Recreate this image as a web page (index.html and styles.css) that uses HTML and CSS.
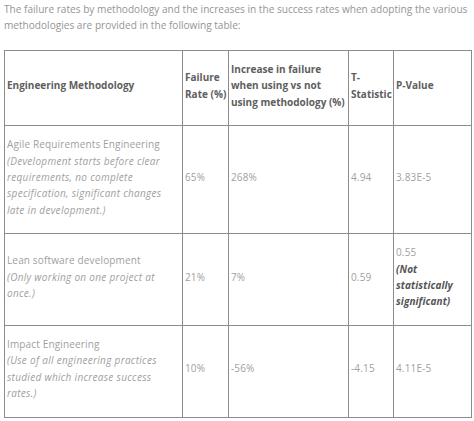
FILE: index.html
```html
<!DOCTYPE html>
<html>
<head>
<meta charset="utf-8">
<link rel="stylesheet" href="styles.css">
</head>
<body>
<p class="intro">The failure rates by methodology and the increases in the success rates when adopting the various methodologies are provided in the following table:</p>
<table class="data">
  <colgroup>
    <col class="c1"><col class="c2"><col class="c3"><col class="c4"><col class="c5">
  </colgroup>
  <thead>
    <tr>
      <th>Engineering Methodology</th>
      <th>Failure Rate (%)</th>
      <th>Increase in failure when using vs not using methodology (%)</th>
      <th>T-Statistic</th>
      <th>P-Value</th>
    </tr>
  </thead>
  <tbody>
    <tr>
      <td>Agile Requirements Engineering<br><em>(Development starts before clear requirements, no complete specification, significant changes late in development.)</em></td>
      <td>65%</td>
      <td>268%</td>
      <td>4.94</td>
      <td>3.83E-5</td>
    </tr>
    <tr>
      <td>Lean software development<br><em>(Only working on one project at once.)</em></td>
      <td>21%</td>
      <td>7%</td>
      <td>0.59</td>
      <td>0.55<br><strong class="note"><em>(Not statistically significant)</em></strong></td>
    </tr>
    <tr>
      <td>Impact Engineering<br><em>(Use of all engineering practices studied which increase success rates.)</em></td>
      <td>10%</td>
      <td>-56%</td>
      <td>-4.15</td>
      <td>4.11E-5</td>
    </tr>
  </tbody>
</table>
</body>
</html>
```

FILE: styles.css
```css
html, body {
  margin: 0;
  padding: 0;
  background: #ffffff;
}
body {
  padding: 1px 0 0 4px;
  font-family: "Open Sans", "DejaVu Sans", sans-serif;
  color: #9a9a9a;
}
.intro {
  margin: 0 0 17px 0;
  font-size: 10.1px;
  line-height: 16px;
  color: #959595;
}
.data {
  border-collapse: collapse;
  table-layout: fixed;
  width: 467px;
  font-size: 10px;
  line-height: 16.4px;
}
.c1 { width: 178px; }
.c2 { width: 46px; }
.c3 { width: 120px; }
.c4 { width: 45px; }
.c5 { width: 78px; }
.data th, .data td {
  border: 1px solid #8c8c8c;
  padding: 10px 2px 15px 2px;
  vertical-align: middle;
  text-align: left;
}
.data th {
  padding-right: 0;
  font-weight: 700;
  color: #5e5e5e;
}
.data td {
  font-weight: 400;
  letter-spacing: 0.15px;
  color: #a0a0a0;
}
.data em {
  font-style: italic;
  letter-spacing: 0.3px;
}
.note {
  font-weight: 700;
  color: #555555;
}
.note em {
  letter-spacing: 0.1px;
}
```
